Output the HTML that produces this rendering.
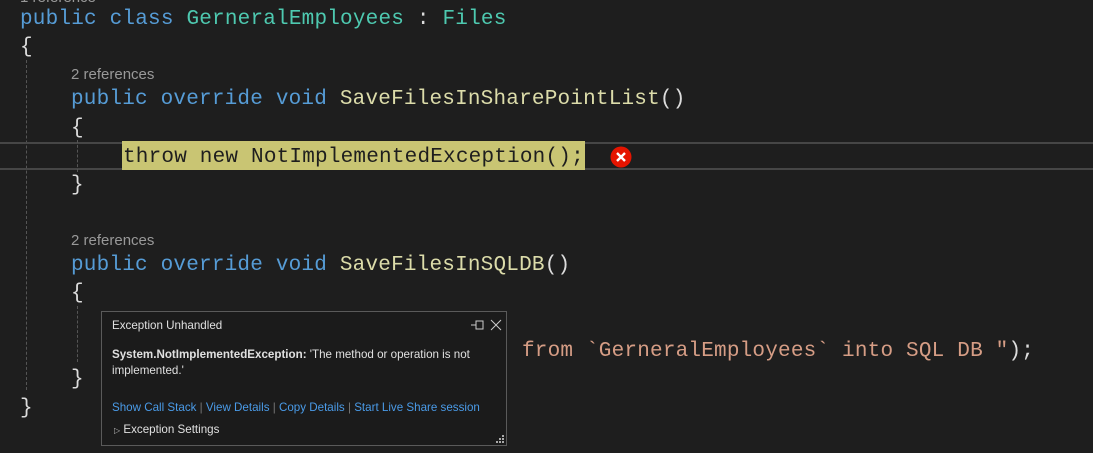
<!DOCTYPE html>
<html><head><style>
body{margin:0;width:1093px;height:453px;background:#1e1e1e;overflow:hidden;position:relative;font-family:"Liberation Mono",monospace}
.l{position:absolute;font-size:21px;letter-spacing:0.2px;white-space:pre;line-height:28px;color:#dcdcdc;margin-top:2px}
.r{position:absolute;font-family:"Liberation Sans",sans-serif;font-size:15px;color:#999;white-space:pre;margin-top:1px}
.k{color:#569cd6}.c{color:#4ec9b0}.m{color:#dcdcaa}.s{color:#d69d85}
.g{position:absolute;border-left:1px dashed #555;width:0}
.pop{position:absolute;left:101px;top:311px;width:404px;height:133px;border:1px solid #5a5a5a;background:#1b1b1b;font-family:"Liberation Sans",sans-serif;font-size:11.6px;color:#e0e0e0}
.lnk{color:#4a9be8}
</style></head><body>
<div class="r" style="left:20px;top:-12px">1 reference</div>
<div class="l" style="left:20px;top:4px"><span class="k">public class</span> <span class="c">GerneralEmployees</span> : <span class="c">Files</span></div>
<div class="l" style="left:20px;top:32px">{</div>
<div class="g" style="left:26px;top:60px;height:330px"></div>
<div class="r" style="left:71px;top:65px">2 references</div>
<div class="l" style="left:71px;top:84px"><span class="k">public override void</span> <span class="m">SaveFilesInSharePointList</span>()</div>
<div class="l" style="left:71px;top:113px">{</div>
<div style="position:absolute;left:0;top:142px;width:1093px;height:2px;background:#464646"></div>
<div style="position:absolute;left:0;top:168px;width:1093px;height:2px;background:#464646"></div>
<div class="g" style="left:77px;top:140px;height:32px"></div>
<div style="position:absolute;left:122px;top:141px;width:463px;height:29px;background:#c9c573"></div>
<div class="l" style="left:123px;top:142px;color:#1e1e1e">throw new NotImplementedException();</div>
<svg style="position:absolute;left:610px;top:146px" width="22" height="22"><circle cx="11" cy="11" r="10.5" fill="#e51400"/><path d="M7 7L15 15M15 7L7 15" stroke="#fff" stroke-width="2.4"/></svg>
<div class="l" style="left:71px;top:170px">}</div>
<div class="r" style="left:71px;top:231px">2 references</div>
<div class="l" style="left:71px;top:250px"><span class="k">public override void</span> <span class="m">SaveFilesInSQLDB</span>()</div>
<div class="l" style="left:71px;top:278px">{</div>
<div class="g" style="left:77px;top:306px;height:56px"></div>
<div class="l s" style="left:522px;top:336px">from `GerneralEmployees` into SQL DB "<span style="color:#dcdcdc">);</span></div>
<div class="l" style="left:71px;top:364px">}</div>
<div class="l" style="left:20px;top:393px">}</div>
<div class="pop">
<div style="position:absolute;left:10px;top:7px">Exception Unhandled</div>
<svg style="position:absolute;left:368px;top:6px" width="34" height="14"><path d="M1 7H6M6 3H13V11H6Z" stroke="#ccc" fill="none"/><path d="M21 2L31 12M31 2L21 12" stroke="#ccc"/></svg>
<div style="position:absolute;left:10px;top:35px;width:385px;line-height:16px"><b>System.NotImplementedException:</b> 'The method or operation is not implemented.'</div>
<div style="position:absolute;left:10px;top:89px;white-space:pre"><span class="lnk">Show Call Stack</span> <span style="color:#777">|</span> <span class="lnk">View Details</span> <span style="color:#777">|</span> <span class="lnk">Copy Details</span> <span style="color:#777">|</span> <span class="lnk">Start Live Share session</span></div>
<div style="position:absolute;left:12px;top:111px"><span style="font-size:8px;color:#bbb">&#9655;</span> Exception Settings</div>
<svg style="position:absolute;left:393px;top:122px" width="10" height="10"><g fill="#aaa"><rect x="7" y="1" width="2" height="2"/><rect x="4" y="4" width="2" height="2"/><rect x="7" y="4" width="2" height="2"/><rect x="1" y="7" width="2" height="2"/><rect x="4" y="7" width="2" height="2"/><rect x="7" y="7" width="2" height="2"/></g></svg>
</div>
</body></html>
